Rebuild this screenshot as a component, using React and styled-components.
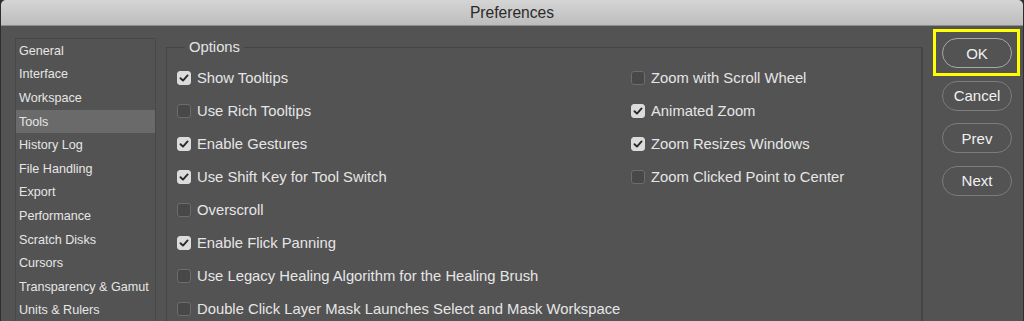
import React from 'react';
import styled, { createGlobalStyle } from 'styled-components';

const GlobalStyle = createGlobalStyle`
  html, body {
    margin: 0;
    padding: 0;
    background: #2e2e2e;
    overflow: hidden;
  }
  body {
    font-family: "Liberation Sans", Arial, sans-serif;
  }
`;

const Window = styled.div`
  width: 1022px;
  height: 321px;
  margin: 0 1px;
  display: flex;
  flex-direction: column;
  background: #535353;
  border-radius: 5px 5px 0 0;
  overflow: hidden;
`;

const TitleBar = styled.div`
  height: 25px;
  flex: none;
  display: flex;
  align-items: center;
  justify-content: center;
  background: linear-gradient(#d5d5d5, #bdbdbd);
  border-bottom: 1px solid #8c8c8c;
  color: #2b2b2b;
  font-size: 15.6px;
`;

const Body = styled.div`
  flex: 1;
  display: flex;
  align-items: flex-start;
  padding: 12px 0 0 14px;
`;

const Sidebar = styled.ul`
  list-style: none;
  margin: 0;
  padding: 0;
  width: 139px;
  height: 300px;
  flex: none;
  border: 1px solid #484848;
`;

const NavItem = styled.li`
  height: 23.6px;
  display: flex;
  align-items: center;
  padding-left: 3px;
  font-size: 12.6px;
  color: #e6e6e6;
  background: ${p => (p.$active ? '#6a6a6a' : 'transparent')};
`;

const Group = styled.fieldset`
  margin: 1px 0 0 10px;
  padding: 6px 0 0 10px;
  width: 744px;
  height: 300px;
  flex: none;
  border: 1px solid #454545;
  border-right-width: 2px;
  min-width: 0;
  display: flex;
`;

const Legend = styled.legend`
  margin-left: 8px;
  padding: 0 4px;
  font-size: 14.8px;
  color: #e4e4e4;
`;

const Column = styled.div`
  display: flex;
  flex-direction: column;
  width: ${p => p.$width}px;
`;

const Row = styled.label`
  height: 33px;
  display: flex;
  align-items: center;
  gap: 6px;
  font-size: 14.8px;
  color: #e6e6e6;
  white-space: nowrap;
`;

const Box = styled.span`
  width: 14px;
  height: 14px;
  flex: none;
  box-sizing: border-box;
  border-radius: 3px;
  display: flex;
  align-items: center;
  justify-content: center;
  background: ${p => (p.$checked ? '#dcdcdc' : '#484848')};
  border: 1px solid ${p => (p.$checked ? '#dcdcdc' : '#6c6c6c')};
`;

const Buttons = styled.div`
  display: flex;
  flex-direction: column;
  gap: 12.6px;
  margin-left: 19px;
`;

const ButtonSlot = styled.div`
  position: relative;
`;

const Highlight = styled.div`
  position: absolute;
  top: -9px;
  left: -9px;
  right: -8px;
  bottom: -8px;
  border: 3px solid #ffff00;
  pointer-events: none;
`;

const Button = styled.button`
  width: 70px;
  height: 30px;
  border-radius: 15px;
  border: 1px solid ${p => (p.$primary ? '#a8a8a8' : '#7c7c7c')};
  background: #535353;
  color: #f0f0f0;
  font-family: inherit;
  font-size: 15px;
  padding: 0;
`;

const nav = [
  'General', 'Interface', 'Workspace', 'Tools', 'History Log', 'File Handling',
  'Export', 'Performance', 'Scratch Disks', 'Cursors', 'Transparency & Gamut', 'Units & Rulers',
];

const leftOptions = [
  ['Show Tooltips', true],
  ['Use Rich Tooltips', false],
  ['Enable Gestures', true],
  ['Use Shift Key for Tool Switch', true],
  ['Overscroll', false],
  ['Enable Flick Panning', true],
  ['Use Legacy Healing Algorithm for the Healing Brush', false],
  ['Double Click Layer Mask Launches Select and Mask Workspace', false],
];

const rightOptions = [
  ['Zoom with Scroll Wheel', false],
  ['Animated Zoom', true],
  ['Zoom Resizes Windows', true],
  ['Zoom Clicked Point to Center', false],
];

const Check = () => (
  <svg width="10" height="10" viewBox="0 0 10 10">
    <polyline points="1.5,5.2 4,7.6 8.6,2.4" fill="none" stroke="#2a2a2a" strokeWidth="1.9" strokeLinecap="round" strokeLinejoin="round" />
  </svg>
);

const Option = ({ label, checked }) => (
  <Row>
    <Box $checked={checked}>{checked && <Check />}</Box>
    {label}
  </Row>
);

export default function App() {
  return (
    <>
      <GlobalStyle />
      <Window>
        <TitleBar>Preferences</TitleBar>
        <Body>
          <Sidebar>
            {nav.map(n => (
              <NavItem key={n} $active={n === 'Tools'}>{n}</NavItem>
            ))}
          </Sidebar>
          <Group>
            <Legend>Options</Legend>
            <Column $width={454}>
              {leftOptions.map(([l, c]) => <Option key={l} label={l} checked={c} />)}
            </Column>
            <Column $width={280}>
              {rightOptions.map(([l, c]) => <Option key={l} label={l} checked={c} />)}
            </Column>
          </Group>
          <Buttons>
            <ButtonSlot>
              <Button $primary>OK</Button>
              <Highlight />
            </ButtonSlot>
            <Button>Cancel</Button>
            <Button>Prev</Button>
            <Button>Next</Button>
          </Buttons>
        </Body>
      </Window>
    </>
  );
}
